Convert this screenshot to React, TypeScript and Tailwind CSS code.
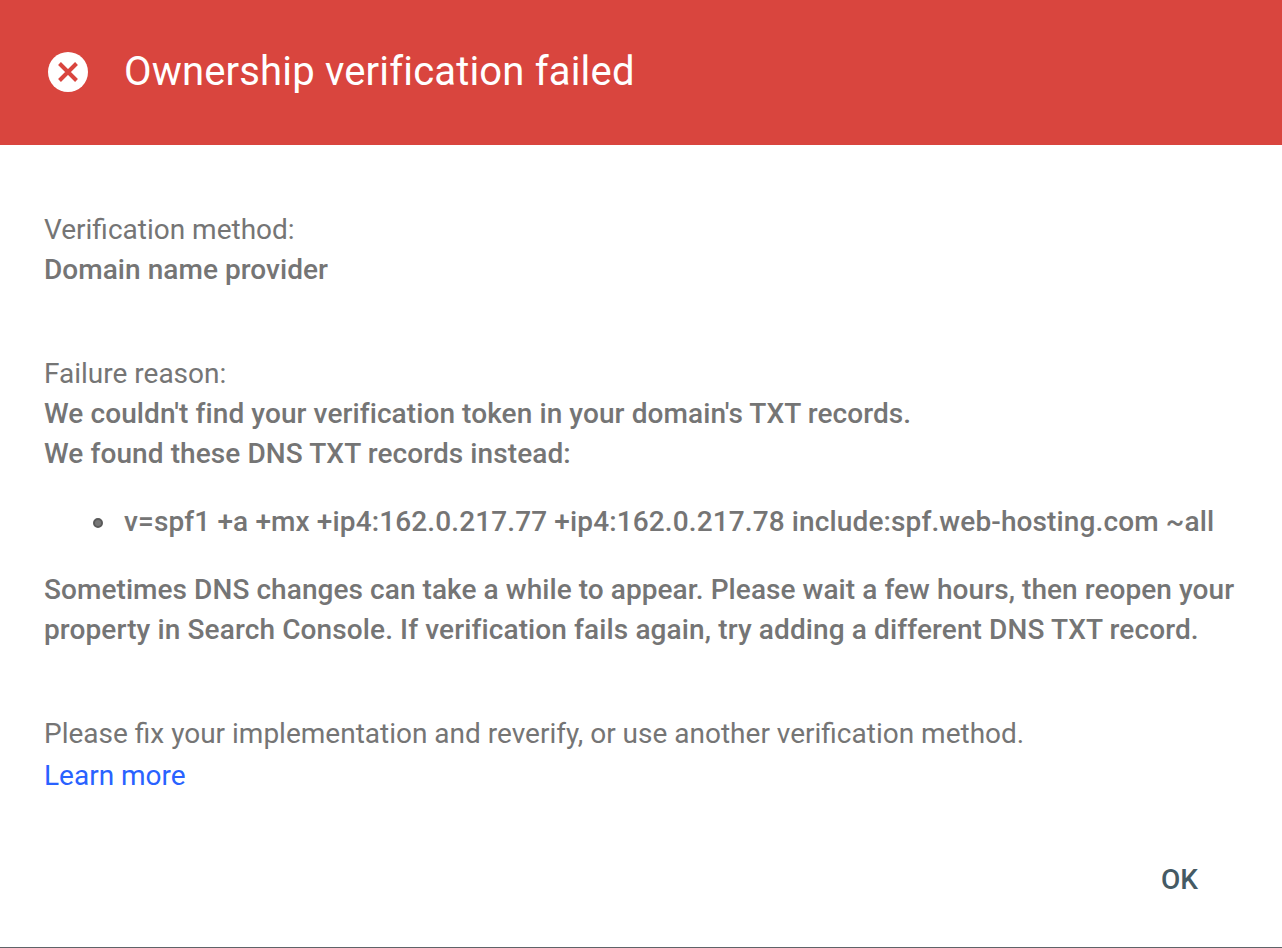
export default function App() {
  return (
    <div className="w-[1282px] h-[948px] bg-white flex flex-col overflow-hidden font-['Roboto',sans-serif] antialiased border-b border-[#5f6368]">
      <div className="h-[145px] bg-[#d9453e] flex items-center pl-[47px] gap-[36px] shrink-0">
        <svg width="42" height="42" viewBox="0 0 42 42" className="mt-[-2px]">
          <circle cx="21" cy="21" r="20" fill="#fff" />
          <path d="M12.5 12.5 L29.5 29.5 M29.5 12.5 L12.5 29.5" stroke="#d9453e" strokeWidth="4" />
        </svg>
        <div className="text-white text-[40px] leading-[48px] font-normal tracking-[0.17px] ml-[-1px] mt-[-2px]">Ownership verification failed</div>
      </div>
      <div className="flex-1 flex flex-col pl-[44px] pr-[40px] pt-[65px] text-[#757575] text-[28px] leading-[40px]">
        <div>Verification method:</div>
        <div className="font-medium tracking-[0.05px]">Domain name provider</div>
        <div className="mt-[64px]">Failure reason:</div>
        <div className="font-medium tracking-[0.09px]">We couldn't find your verification token in your domain's TXT records.</div>
        <div className="font-medium tracking-[0.09px]">We found these DNS TXT records instead:</div>
        <ul className="mt-[28px] pl-[80px] font-medium tracking-[0.125px]">
          <li className="relative">
            <span className="absolute left-[-31px] top-[16px] w-[10px] h-[10px] rounded-full bg-[#777777] border-2 border-[#5a5a5a]"></span>
            v=spf1 +a +mx +ip4:162.0.217.77 +ip4:162.0.217.78 include:spf.web-hosting.com ~all
          </li>
        </ul>
        <div className="mt-[28px] font-medium">
          <div className="tracking-[0.066px]">Sometimes DNS changes can take a while to appear. Please wait a few hours, then reopen your</div>
          <div className="tracking-[0.115px]">property in Search Console. If verification fails again, try adding a different DNS TXT record.</div>
        </div>
        <div className="mt-[64px]">Please fix your implementation and reverify, or use another verification method.</div>
        <div className="mt-[2px] text-[#2962ff]">Learn more</div>
        <div className="mt-[64px] flex justify-end pr-[44px] text-[#455a64] font-medium">OK</div>
      </div>
    </div>
  );
}
